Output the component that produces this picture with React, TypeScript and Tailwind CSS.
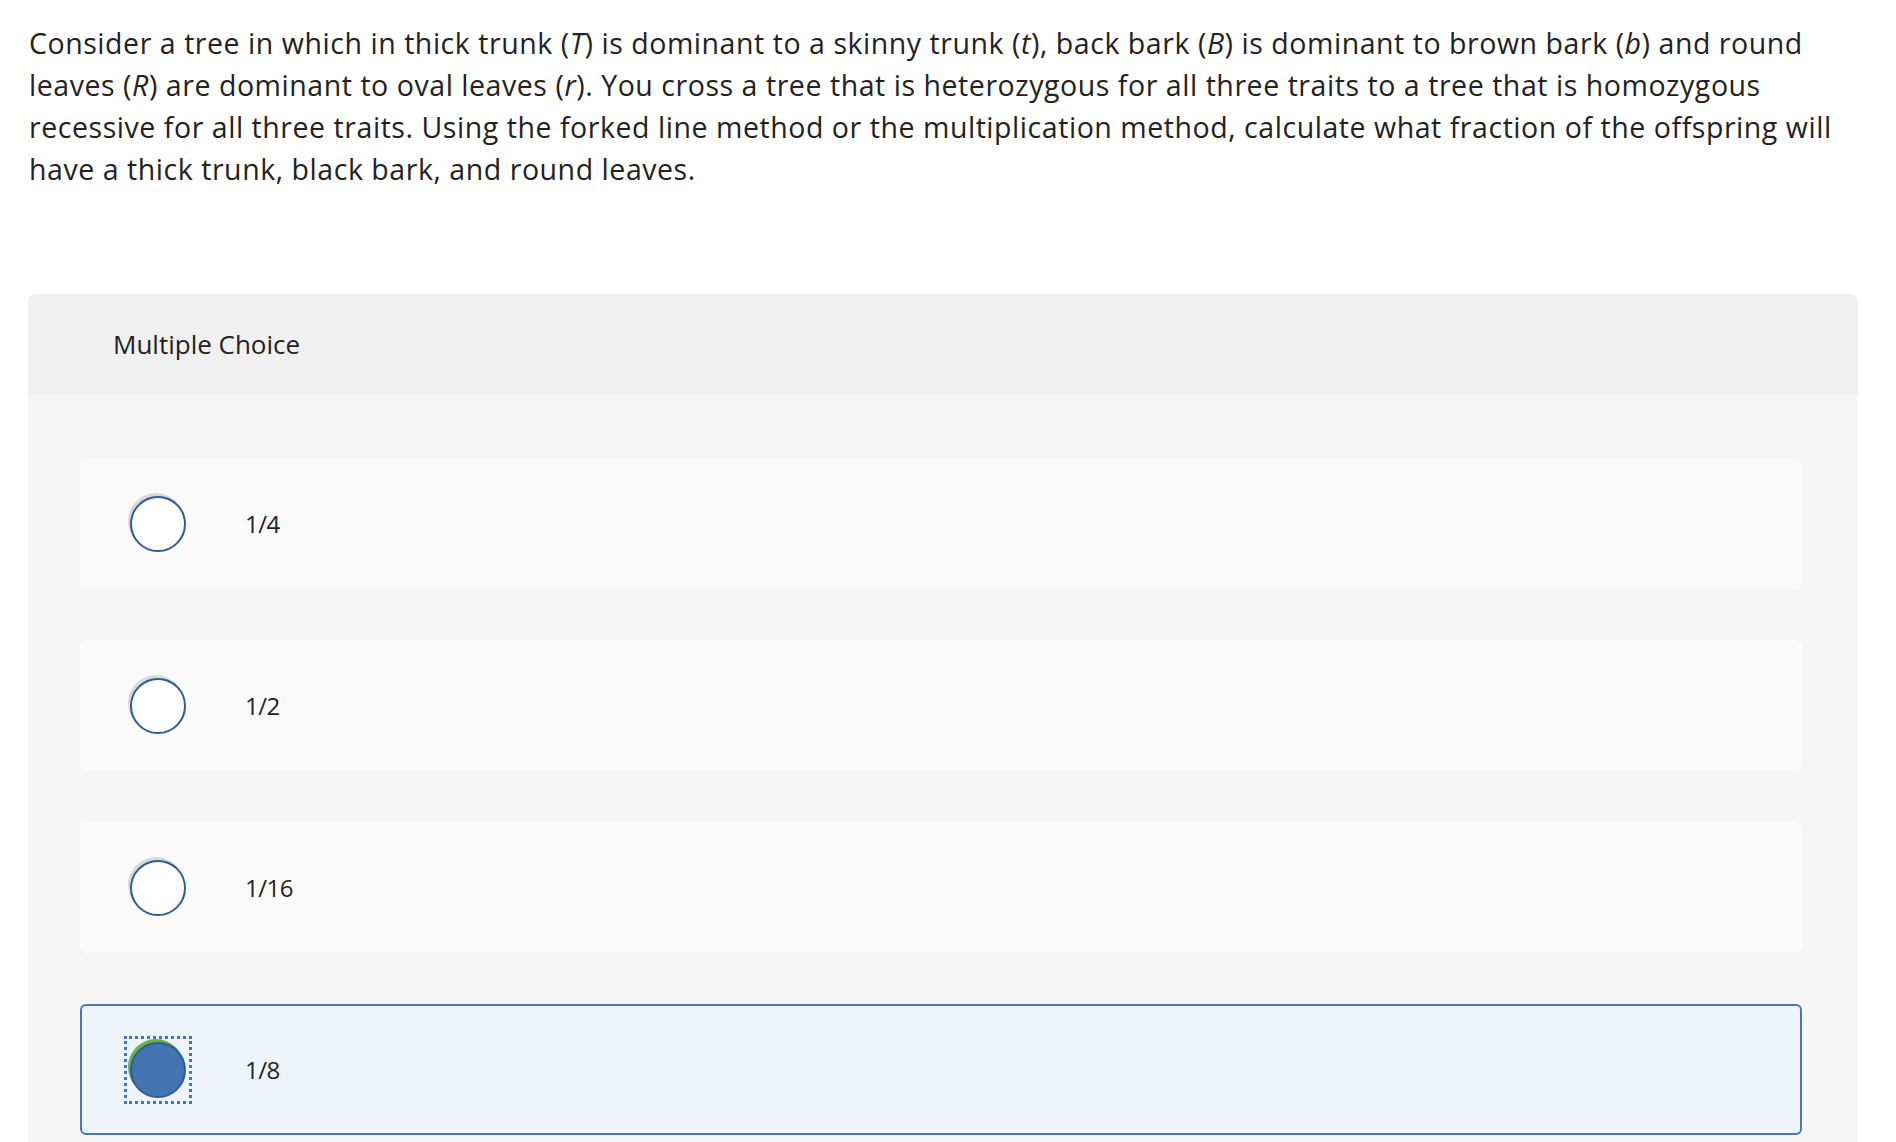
import React from 'react';

const options = [
  { id: 'a', label: '1/4' },
  { id: 'b', label: '1/2' },
  { id: 'c', label: '1/16' },
  { id: 'd', label: '1/8' },
];

function Radio({ checked }: { checked: boolean }) {
  if (checked) {
    return (
      <div className="w-[68px] h-[68px] flex items-center justify-center border-[3px] border-dotted border-[#4472c4]">
        <div className="w-[56px] h-[56px] rounded-full bg-[#4473b1] border-2 border-[#2f5c94] shadow-[-2px_-3px_0_0_#6ab04c]" />
      </div>
    );
  }
  return (
    <div className="w-[68px] h-[68px] flex items-center justify-center">
      <div className="w-[56px] h-[56px] rounded-full bg-white border-2 border-[#2f5c94] shadow-[-2px_-3px_0_0_#d9d9d9]" />
    </div>
  );
}

export default function App() {
  const [selected, setSelected] = React.useState('d');

  return (
    <div className="min-h-screen bg-white text-[#222222] font-['Open_Sans','Liberation_Sans',sans-serif]">
      <div className="px-[29px] pt-[22px]">
        <p className="text-[28.5px] leading-[42px] tracking-[0.55px] max-w-[1850px]">
          Consider a tree in which in thick trunk (<i>T</i>) is dominant to a skinny trunk (<i>t</i>), back bark (<i>B</i>) is dominant to brown bark (<i>b</i>) and round
          <br />
          leaves (<i>R</i>) are dominant to oval leaves (<i>r</i>). You cross a tree that is heterozygous for all three traits to a tree that is homozygous
          <br />
          recessive for all three traits. Using the forked line method or the multiplication method, calculate what fraction of the offspring will
          <br />
          have a thick trunk, black bark, and round leaves.
        </p>
      </div>

      <div className="ml-[28px] w-[1830px] mt-[104px] rounded-t-[8px] bg-[#f5f5f5] overflow-hidden">
        <div className="h-[100px] bg-[#f0f0f0] flex items-center pl-[85px] pr-8">
          <span className="text-[26px]">Multiple Choice</span>
        </div>
        <div className="pl-[52px] pr-[56px] pt-[64px] pb-10 flex flex-col gap-[51px]">
          {options.map((o) => {
            const isSel = o.id === selected;
            return (
              <button
                key={o.id}
                onClick={() => setSelected(o.id)}
                className={
                  isSel
                    ? 'h-[131px] w-full rounded-[6px] border-2 border-[#4a76b5] bg-[#edf4fb] flex items-center pl-[42px] text-left'
                    : 'h-[131px] w-full rounded-[6px] border-2 border-transparent bg-[#fafafa] flex items-center pl-[42px] text-left'
                }
              >
                <Radio checked={isSel} />
                <span className="ml-[53px] text-[24px] tracking-[-0.5px]">{o.label}</span>
              </button>
            );
          })}
        </div>
      </div>
    </div>
  );
}
